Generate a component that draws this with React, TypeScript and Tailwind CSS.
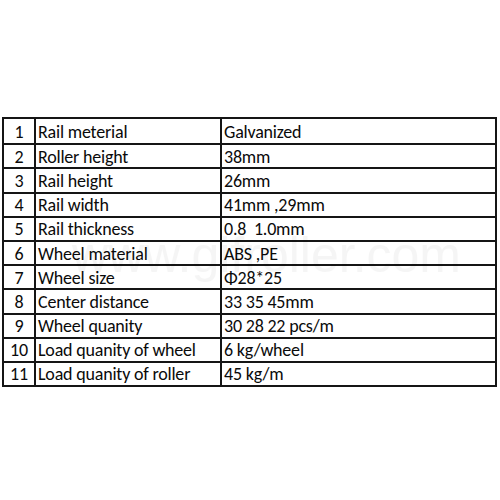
import React from "react";

const rows: [string, string, string][] = [
  ["1", "Rail meterial", "Galvanized"],
  ["2", "Roller height", "38mm"],
  ["3", "Rail height", "26mm"],
  ["4", "Rail width", "41mm ,29mm"],
  ["5", "Rail thickness", "0.8  1.0mm"],
  ["6", "Wheel material", "ABS ,PE"],
  ["7", "Wheel size", "Φ28*25"],
  ["8", "Center distance", "33 35 45mm"],
  ["9", "Wheel quanity", "30 28 22 pcs/m"],
  ["10", "Load quanity of wheel", "6 kg/wheel"],
  ["11", "Load quanity of roller", "45 kg/m"],
];

export default function App() {
  return (
    <div className="w-[500px] h-[500px] bg-white relative overflow-hidden" style={{ fontFamily: "Carlito, Calibri, Lato, 'Open Sans', sans-serif" }}>
      <div className="pt-[117px] pl-[2px]">
        <div className="w-[495px] border-2 border-[#151515] flex flex-col">
          {rows.map((r, i) => (
            <div key={i} className={`flex h-[24.2px] ${i > 0 ? "border-t-2 border-[#151515]" : ""}`}>
              <div className="w-[32px] border-r-2 border-[#151515] flex items-center justify-center text-[18px] text-[#0a0a0a] leading-none pt-[1px] tracking-[-0.2px]">{r[0]}</div>
              <div className="w-[186px] border-r-2 border-[#151515] flex items-center pl-[2px] text-[18px] text-[#0a0a0a] leading-none pt-[1px] whitespace-nowrap tracking-[-0.2px]">{r[1]}</div>
              <div className="flex-1 flex items-center pl-[2px] text-[18px] text-[#0a0a0a] leading-none pt-[1px] whitespace-pre tracking-[-0.2px]">{r[2]}</div>
            </div>
          ))}
        </div>
      </div>
      <div className="absolute left-[72px] top-[218px] text-[50px] text-[#000] opacity-[0.035] whitespace-nowrap pointer-events-none" style={{ fontFamily: "'Liberation Sans', sans-serif" }}>
        www.gifroller.com
      </div>
    </div>
  );
}
